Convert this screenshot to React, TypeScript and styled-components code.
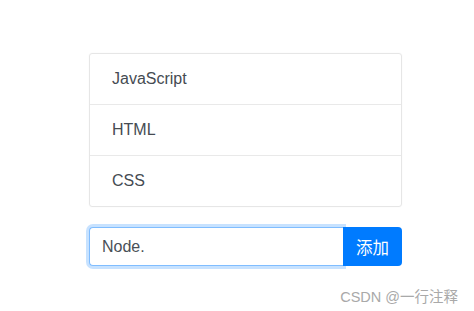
import { useState } from "react";
import styled, { createGlobalStyle } from "styled-components";

const GlobalStyle = createGlobalStyle`
  html, body {
    margin: 0;
    padding: 0;
    background: #ffffff;
  }
  body {
    font-family: "Liberation Sans", Arial, "Noto Sans CJK SC", sans-serif;
    color: #495057;
  }
`;

const Page = styled.div`
  width: 474px;
  height: 311px;
  position: relative;
  padding-top: 53px;
  box-sizing: border-box;
`;

const Wrapper = styled.div`
  width: 313px;
  margin-left: 89px;
`;

const List = styled.ul`
  list-style: none;
  margin: 0;
  padding: 0;
  border: 1px solid #e6e6e6;
  border-radius: 3px;
  box-shadow: 0 0 2px rgba(0, 0, 0, 0.04);
`;

const Item = styled.li`
  height: 50px;
  display: flex;
  align-items: center;
  padding-left: 22px;
  font-size: 16px;
  color: #454b52;
  & + & {
    border-top: 1px solid #e9e9e9;
  }
`;

const Form = styled.div`
  display: flex;
  margin-top: 20px;
  height: 39px;
`;

const Input = styled.input`
  flex: 1;
  min-width: 0;
  height: 100%;
  box-sizing: border-box;
  border: 1px solid #80bdff;
  border-right: none;
  border-radius: 4px 0 0 4px;
  box-shadow: 0 0 0 3px rgba(0, 123, 255, 0.22);
  padding: 0 12px;
  font-family: "Liberation Sans", Arial, sans-serif;
  font-size: 16px;
  color: #495057;
  outline: none;
  caret-color: #333;
`;

const Button = styled.button`
  width: 59px;
  height: 100%;
  border: none;
  border-radius: 0 4px 4px 0;
  background: #007bff;
  color: #ffffff;
  font-family: "Noto Sans CJK SC", sans-serif;
  font-size: 16.5px;
  padding: 0;
  cursor: pointer;
`;

const Watermark = styled.div`
  position: absolute;
  right: 16px;
  bottom: 5px;
  font-size: 14.5px;
  color: #a9a9a9;
  font-family: "Liberation Sans", Arial, "Noto Sans CJK SC", sans-serif;
`;

const App = () => {
  const [items, setItems] = useState(["JavaScript", "HTML", "CSS"]);
  const [value, setValue] = useState("Node.");

  const handleAdd = () => {
    if (!value.trim()) return;
    setItems([...items, value]);
    setValue("");
  };

  return (
    <>
      <GlobalStyle />
      <Page>
        <Wrapper>
          <List>
            {items.map((item) => (
              <Item key={item}>{item}</Item>
            ))}
          </List>
          <Form>
            <Input
              autoFocus
              value={value}
              onChange={(e) => setValue(e.target.value)}
            />
            <Button onClick={handleAdd}>添加</Button>
          </Form>
        </Wrapper>
        <Watermark>CSDN @一行注释</Watermark>
      </Page>
    </>
  );
};

export default App;
